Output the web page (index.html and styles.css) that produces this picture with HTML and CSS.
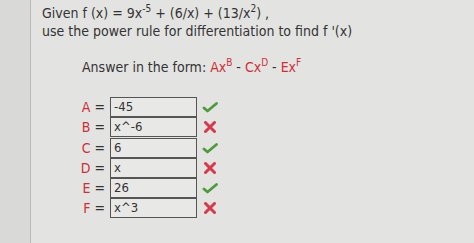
FILE: index.html
```html
<html lang="en">

<head>
    <meta charset="UTF-8">
    <meta name="viewport" content="width=device-width, initial-scale=1.0">
    <title>Power rule</title>
    <link rel="stylesheet" href="styles.css">
</head>

<body>
    <div class="page">
        <div class="gutter"></div>
        <div class="panel">
            <p class="question">
                Given f (x) = 9x<sup>-5</sup> + (6/x) + (13/x<sup>2</sup>) ,<br>
                use the power rule for differentiation to find f '(x)
            </p>
            <p class="form">
                Answer in the form:
                <span class="red">Ax<sup>B</sup></span> -
                <span class="red">Cx<sup>D</sup></span> -
                <span class="red">Ex<sup>F</sup></span>
            </p>
            <div class="answers">
                <div class="row">
                    <span class="label"><span class="red">A</span> =</span>
                    <span class="box">-45</span>
                    <svg class="mark" viewBox="0 0 16 12"><path d="M2 7 L5.5 10 L14.5 2.5" fill="none" stroke="#4f9a3c" stroke-width="2.8" stroke-linecap="round" stroke-linejoin="round"/></svg>
                </div>
                <div class="row">
                    <span class="label"><span class="red">B</span> =</span>
                    <span class="box">x^-6</span>
                    <svg class="mark" viewBox="0 0 16 12"><path d="M3.5 1.5 L12.5 10.5 M12.5 1.5 L3.5 10.5" fill="none" stroke="#d8384a" stroke-width="3" stroke-linecap="round"/></svg>
                </div>
                <div class="row">
                    <span class="label"><span class="red">C</span> =</span>
                    <span class="box">6</span>
                    <svg class="mark" viewBox="0 0 16 12"><path d="M2 7 L5.5 10 L14.5 2.5" fill="none" stroke="#4f9a3c" stroke-width="2.8" stroke-linecap="round" stroke-linejoin="round"/></svg>
                </div>
                <div class="row">
                    <span class="label"><span class="red">D</span> =</span>
                    <span class="box">x</span>
                    <svg class="mark" viewBox="0 0 16 12"><path d="M3.5 1.5 L12.5 10.5 M12.5 1.5 L3.5 10.5" fill="none" stroke="#d8384a" stroke-width="3" stroke-linecap="round"/></svg>
                </div>
                <div class="row">
                    <span class="label"><span class="red">E</span> =</span>
                    <span class="box">26</span>
                    <svg class="mark" viewBox="0 0 16 12"><path d="M2 7 L5.5 10 L14.5 2.5" fill="none" stroke="#4f9a3c" stroke-width="2.8" stroke-linecap="round" stroke-linejoin="round"/></svg>
                </div>
                <div class="row">
                    <span class="label"><span class="red">F</span> =</span>
                    <span class="box">x^3</span>
                    <svg class="mark" viewBox="0 0 16 12"><path d="M3.5 1.5 L12.5 10.5 M12.5 1.5 L3.5 10.5" fill="none" stroke="#d8384a" stroke-width="3" stroke-linecap="round"/></svg>
                </div>
            </div>
        </div>
    </div>
</body>

</html>
```

FILE: styles.css
```css
body {
    margin: 0;
    font-family: "DejaVu Sans Condensed", "DejaVu Sans", Verdana, sans-serif;
    color: #333;
    background-color: #e3e4e2;
}
.page {
    display: flex;
    height: 243px;
}
.gutter {
    width: 30px;
    background-color: #d9dad8;
    border-right: 1px solid #b8b8b6;
}
.panel {
    flex: 1;
    padding-left: 11px;
}
.question {
    margin: 4px 0 0 0;
    font-size: 14px;
    line-height: 18px;
}
sup {
    font-size: 10px;
    line-height: 0;
}
.form {
    margin: 19px 0 0 40px;
    font-size: 14px;
}
.red {
    color: #cf2f35;
}
.answers {
    display: flex;
    flex-direction: column;
    gap: 0.25px;
    margin-top: 22px;
}
.row {
    display: flex;
    align-items: center;
    height: 20px;
    font-size: 14px;
}
.label {
    width: 68px;
    padding-right: 5px;
    box-sizing: border-box;
    text-align: right;
}
.box {
    width: 82px;
    height: 18px;
    border: 1px solid #555;
    background-color: #e8e8e6;
    font-size: 13px;
    line-height: 18px;
    padding-left: 3px;
}
.mark {
    width: 16px;
    height: 12px;
    margin-left: 5px;
}
```
